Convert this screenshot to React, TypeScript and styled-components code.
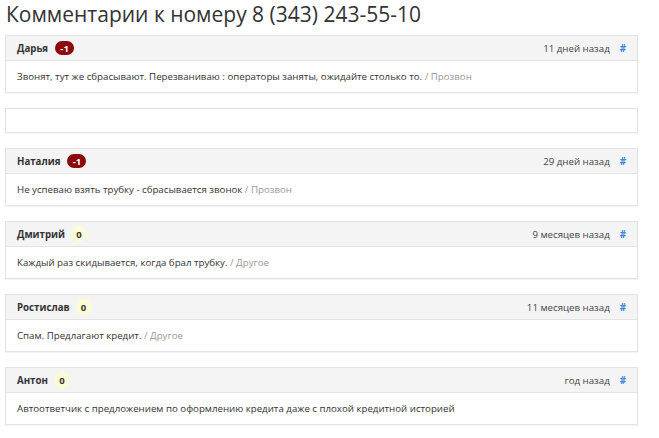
import React from "react";
import styled, { createGlobalStyle } from "styled-components";

type Comment = {
  name: string;
  rating: number;
  time: string;
  text: string;
  category?: string;
};

const comments: Comment[] = [
  {
    name: "Наталия",
    rating: -1,
    time: "29 дней назад",
    text: "Не успеваю взять трубку - сбрасывается звонок",
    category: "Прозвон",
  },
  {
    name: "Дмитрий",
    rating: 0,
    time: "9 месяцев назад",
    text: "Каждый раз скидывается, когда брал трубку.",
    category: "Другое",
  },
  {
    name: "Ростислав",
    rating: 0,
    time: "11 месяцев назад",
    text: "Спам. Предлагают кредит.",
    category: "Другое",
  },
  {
    name: "Антон",
    rating: 0,
    time: "год назад",
    text: "Автоответчик с предложением по оформлению кредита даже с плохой кредитной историей",
  },
];

const first: Comment = {
  name: "Дарья",
  rating: -1,
  time: "11 дней назад",
  text: "Звонят, тут же сбрасывают. Перезваниваю : операторы заняты, ожидайте столько то.",
  category: "Прозвон",
};

const GlobalStyle = createGlobalStyle`
  body {
    margin: 0;
    background: #fff;
    font-family: "Open Sans", "Noto Sans", sans-serif;
    color: #333;
  }
`;

const Page = styled.div`
  padding: 0 21px 0 5px;
`;

const Title = styled.h1`
  margin: 0 0 7px 1px;
  font-size: 21px;
  font-weight: 400;
  line-height: 28px;
  color: #333;
`;

const Card = styled.div`
  border: 1px solid #e3e3e3;
  background: #fff;
  margin-bottom: 15px;
  box-shadow: 0 1px 1px rgba(0, 0, 0, 0.04);
`;

const EmptyCard = styled(Card)`
  height: 23px;
`;

const Header = styled.div`
  display: flex;
  align-items: center;
  height: 24px;
  padding: 0 11px;
  background: #f4f4f4;
  border-bottom: 1px solid #e3e3e3;
  font-size: 9.7px;
`;

const Name = styled.span`
  font-weight: 700;
  color: #333;
`;

const Badge = styled.span<{ $negative: boolean }>`
  display: inline-flex;
  align-items: center;
  justify-content: center;
  margin-left: ${(p) => (p.$negative ? "7px" : "6px")};
  height: ${(p) => (p.$negative ? "14px" : "16px")};
  min-width: ${(p) => (p.$negative ? "19px" : "16px")};
  padding: 0 ${(p) => (p.$negative ? "3px" : "0")};
  box-sizing: border-box;
  border-radius: 8px;
  font-size: 9.5px;
  font-weight: 700;
  background: ${(p) => (p.$negative ? "#8b0a0a" : "#fdfad6")};
  color: ${(p) => (p.$negative ? "#fff" : "#333")};
`;

const Time = styled.span`
  margin-left: auto;
  color: #444;
`;

const Hash = styled.a`
  margin-left: 10px;
  color: #3c8ae0;
  text-decoration: none;
  font-weight: 700;
`;

const Body = styled.div`
  height: 31px;
  display: flex;
  align-items: center;
  padding: 0 11px;
  font-size: 9.7px;
  color: #333;
`;

const Category = styled.span`
  color: #999;
`;

const CommentCard: React.FC<{ c: Comment }> = ({ c }) => (
  <Card>
    <Header>
      <Name>{c.name}</Name>
      <Badge $negative={c.rating < 0}>{c.rating}</Badge>
      <Time>{c.time}</Time>
      <Hash href="#">#</Hash>
    </Header>
    <Body>
      <span>
        {c.text}
        {c.category && <Category> / {c.category}</Category>}
      </span>
    </Body>
  </Card>
);

export default function App() {
  return (
    <>
      <GlobalStyle />
      <Page>
        <Title>Комментарии к номеру 8 (343) 243-55-10</Title>
        <CommentCard c={first} />
        <EmptyCard />
        {comments.map((c) => (
          <CommentCard key={c.name} c={c} />
        ))}
      </Page>
    </>
  );
}
